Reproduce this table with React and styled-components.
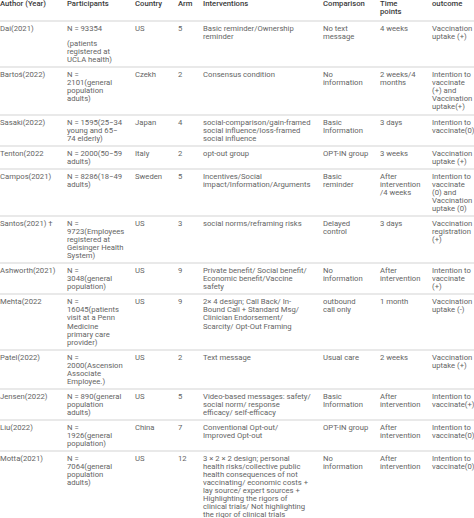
import React from "react";
import styled, { createGlobalStyle } from "styled-components";

const Global = createGlobalStyle`
  html, body { margin: 0; padding: 0; background: #fff; overflow: hidden; }
  body { font-family: Roboto, "Liberation Sans", Arial, sans-serif; }
`;

const Table = styled.div`
  width: 500px;
  display: flex;
  flex-direction: column;
`;

const Row = styled.div`
  display: grid;
  grid-template-columns: 67px 68px 43px 25px 120px 57px 52px 68px;
  padding: ${(p) => (p.$head ? "0 0 4px" : "3px 0 2px")};
  border-bottom: 2px solid #e9e9e9;
  color: ${(p) => (p.$head ? "#3a3a3a" : "#646464")};
  font-weight: ${(p) => (p.$head ? 500 : 400)};
`;

const Cell = styled.div`
  font-size: 7.7px;
  line-height: 8.05px;
  white-space: nowrap;
`;

const Para = styled.div`
  margin-top: 7px;
`;

const head = ["Author (Year)", "Participants", "Country", "Arm", "Interventions", "Comparison", "Time\npoints", "outcome"];

const rows = [
  ["Dai(2021)", ["N = 93354", "¶(patients\nregistered at\nUCLA health)"], "US", "5", "Basic reminder/Ownership\nreminder", "No text\nmessage", "4 weeks", "Vaccination\nuptake (+)"],
  ["Bartoś(2022)", "N =\n2101(general\npopulation\nadults)", "Czekh", "2", "Consensus condition", "No\ninformation", "2 weeks/4\nmonths", "Intention to\nvaccinate\n(+) and\nVaccination\nuptake(+)"],
  ["Sasaki(2022)", "N = 1595(25−34\nyoung and 65−\n74 elderly)", "Japan", "4", "social-comparison/gain-framed\nsocial influence/loss-framed\nsocial influence", "Basic\nInformation", "3 days", "Intention to\nvaccinate(0)"],
  ["Tenton(2022", "N = 2000(50−59\nadults)", "Italy", "2", "opt-out group", "OPT-IN group", "3 weeks", "Vaccination\nuptake (+)"],
  ["Campos(2021)", "N = 8286(18−49\nadults)", "Sweden", "5", "Incentives/Social\nimpact/Information/Arguments", "Basic\nreminder", "After\nintervention\n/4 weeks", "Intention to\nvaccinate\n(0) and\nVaccination\nuptake (0)"],
  ["Santos(2021) †", "N =\n9723(Employees\nregistered at\nGeisinger Health\nSystem)", "US", "3", "social norms/reframing risks", "Delayed\ncontrol", "3 days", "Vaccination\nregistration\n(+)"],
  ["Ashworth(2021)", "N =\n3048(general\npopulation)", "US", "9", "Private benefit/ Social benefit/\nEconomic benefit/Vaccine\nsafety", "No\ninformation", "After\nintervention", "Intention to\nvaccinate\n(+)"],
  ["Mehta(2022", "N =\n16045(patients\nvisit at a Penn\nMedicine\nprimary care\nprovider)", "US", "9", "2× 4 design; Call Back/ In-\nBound Call + Standard Msg/\nClinician Endorsement/\nScarcity/ Opt-Out Framing", "outbound\ncall only", "1 month", "Vaccination\nuptake (-)"],
  ["Patel(2022)", "N =\n2000(Ascension\nAssociate\nEmployee.)", "US", "2", "Text message", "Usual care", "2 weeks", "Vaccination\nuptake (+)"],
  ["Jensen(2022)", "N = 890(general\npopulation\nadults)", "US", "5", "Video-based messages: safety/\nsocial norm/ response\nefficacy/ self-efficacy", "Basic\nInformation", "After\nintervention", "Intention to\nvaccinate(+)"],
  ["Liu(2022)", "N =\n1926(general\npopulation)", "China", "7", "Conventional Opt-out/\nImproved Opt-out", "OPT-IN group", "After\nintervention", "Intention to\nvaccinate(0)"],
  ["Motta(2021)", "N =\n7064(general\npopulation\nadults)", "US", "12", "3 × 2 × 2 design; personal\nhealth risks/collective public\nhealth consequences of not\nvaccinating/ economic costs +\nlay source/ expert sources +\nHighlighting the rigors of\nclinical trials/ Not highlighting\nthe rigor of clinical trials", "No\ninformation", "After\nintervention", "Intention to\nvaccinate(0)"],
];

const Lines = ({ text }) => {
  const parts = text.split("\n");
  return parts.map((t, i) => (
    <React.Fragment key={i}>
      {t}
      {i < parts.length - 1 && <br />}
    </React.Fragment>
  ));
};

const renderCell = (c) => {
  if (Array.isArray(c)) {
    return c.map((p, i) =>
      p.startsWith("¶") ? (
        <Para key={i}>
          <Lines text={p.slice(1)} />
        </Para>
      ) : (
        <div key={i}>
          <Lines text={p} />
        </div>
      )
    );
  }
  return <Lines text={c} />;
};

export default function App() {
  return (
    <>
      <Global />
      <Table>
        <Row $head>
          {head.map((h, i) => (
            <Cell key={i}>
              <Lines text={h} />
            </Cell>
          ))}
        </Row>
        {rows.map((r, ri) => (
          <Row key={ri}>
            {r.map((c, ci) => (
              <Cell key={ci}>{renderCell(c)}</Cell>
            ))}
          </Row>
        ))}
      </Table>
    </>
  );
}
